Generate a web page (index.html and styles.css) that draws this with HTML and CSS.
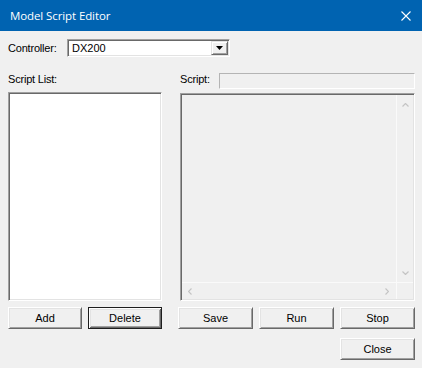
FILE: index.html
```html
<!DOCTYPE html>
<html lang="en">
<head>
  <meta charset="UTF-8">
  <title>Model Script Editor</title>
  <link rel="stylesheet" href="styles.css">
</head>
<body>
  <div class="window">
    <div class="titlebar">
      <span class="title">Model Script Editor</span>
      <svg class="close-x" width="10" height="10" viewBox="0 0 10 10">
        <path d="M0.5 0.5 L9.5 9.5 M9.5 0.5 L0.5 9.5" stroke="#fff" stroke-width="1.1" fill="none"/>
      </svg>
    </div>
    <div class="content">
      <div class="controller-row">
        <span class="label controller-label">Controller:</span>
        <div class="combo">
          <span class="combo-text">DX200</span>
          <div class="combo-btn">
            <svg width="7" height="4" viewBox="0 0 7 4"><path d="M0 0 H7 L3.5 4 Z" fill="#000"/></svg>
          </div>
        </div>
      </div>

      <div class="panes">
        <div class="pane-left">
          <div class="label list-label">Script List:</div>
          <div class="listbox"></div>
        </div>
        <div class="pane-right">
          <div class="script-row">
            <span class="label script-label">Script:</span>
            <div class="name-field"></div>
          </div>
          <div class="script-area">
            <div class="script-text"></div>
            <div class="vscroll">
              <svg width="7" height="4" viewBox="0 0 7 4"><path d="M0.5 3.5 L3.5 0.5 L6.5 3.5" stroke="#c4c4c4" stroke-width="1.2" fill="none"/></svg>
              <svg width="7" height="4" viewBox="0 0 7 4"><path d="M0.5 0.5 L3.5 3.5 L6.5 0.5" stroke="#c4c4c4" stroke-width="1.2" fill="none"/></svg>
            </div>
            <div class="hscroll">
              <svg width="4" height="7" viewBox="0 0 4 7"><path d="M3.5 0.5 L0.5 3.5 L3.5 6.5" stroke="#c4c4c4" stroke-width="1.2" fill="none"/></svg>
              <svg width="4" height="7" viewBox="0 0 4 7"><path d="M0.5 0.5 L3.5 3.5 L0.5 6.5" stroke="#c4c4c4" stroke-width="1.2" fill="none"/></svg>
            </div>
            <div class="corner"></div>
          </div>
        </div>
      </div>

      <div class="button-row">
        <div class="btn-group left-group">
          <button class="btn">Add</button>
          <button class="btn default">Delete</button>
        </div>
        <div class="btn-group right-group">
          <button class="btn">Save</button>
          <button class="btn">Run</button>
          <button class="btn">Stop</button>
        </div>
      </div>

      <div class="footer">
        <button class="btn close-btn">Close</button>
      </div>
    </div>
  </div>
</body>
</html>
```

FILE: styles.css
```css
body {
  margin: 0;
  background: #f0f0f0;
  font-family: "Liberation Sans", Arial, sans-serif;
  font-size: 11px;
  color: #000;
}
.window {
  width: 422px;
  height: 368px;
  background: #f0f0f0;
  overflow: hidden;
}
.titlebar {
  height: 31px;
  background: #0063b1;
  display: flex;
  align-items: center;
  justify-content: space-between;
  padding: 0 11px 0 10px;
  box-sizing: border-box;
}
.title {
  color: #fff;
  font-family: "Open Sans", "Noto Sans", sans-serif;
  font-size: 11.5px;
  letter-spacing: -0.1px;
}
.close-x {
  display: block;
}
.content {
  padding: 8px 7px 0 8px;
}
.label {
  line-height: 13px;
  white-space: nowrap;
  letter-spacing: -0.2px;
}
.controller-row {
  display: flex;
  align-items: center;
  height: 18px;
}
.controller-label {
  width: 59px;
}
.combo {
  width: 163px;
  height: 18px;
  box-sizing: border-box;
  background: #fff;
  border-style: solid;
  border-width: 1px;
  border-color: #a0a0a0 #fff #fff #a0a0a0;
  box-shadow: inset 1px 1px 0 #696969, inset -1px -1px 0 #e3e3e3;
  display: flex;
  align-items: center;
  justify-content: space-between;
  padding: 1px;
}
.combo-text {
  padding-left: 3px;
  line-height: 13px;
}
.combo-btn {
  width: 17px;
  height: 14px;
  box-sizing: border-box;
  background: #f0f0f0;
  border-style: solid;
  border-width: 1px;
  border-color: #e3e3e3 #696969 #696969 #e3e3e3;
  box-shadow: inset 1px 1px 0 #fff, inset -1px -1px 0 #a0a0a0;
  display: flex;
  align-items: center;
  justify-content: center;
}
.combo-btn svg {
  display: block;
}
.panes {
  display: flex;
  gap: 18px;
  margin-top: 16px;
}
.pane-left {
  width: 154px;
}
.list-label {
  height: 19px;
}
.listbox {
  height: 209px;
  box-sizing: border-box;
  background: #fff;
  border-style: solid;
  border-width: 1px;
  border-color: #a0a0a0 #fff #fff #a0a0a0;
  box-shadow: inset 1px 1px 0 #696969, inset -1px -1px 0 #e3e3e3;
}
.pane-right {
  width: 235px;
}
.script-row {
  display: flex;
  align-items: flex-start;
  height: 16px;
}
.script-label {
  width: 39px;
}
.name-field {
  flex: 1;
  height: 16px;
  box-sizing: border-box;
  border-style: solid;
  border-width: 1px;
  border-color: #b4b4b4 #fff #fff #b4b4b4;
  background: #f0f0f0;
}
.script-area {
  margin-top: 4px;
  height: 208px;
  box-sizing: border-box;
  border-style: solid;
  border-width: 1px;
  border-color: #a0a0a0 #fff #fff #a0a0a0;
  box-shadow: inset 1px 1px 0 #696969, inset -1px -1px 0 #e3e3e3;
  padding: 1px;
  display: grid;
  grid-template-columns: 1fr 17px;
  grid-template-rows: 1fr 17px;
}
.vscroll {
  border-left: 1px solid #fafafa;
  display: flex;
  flex-direction: column;
  align-items: center;
  justify-content: space-between;
  padding: 8px 0 7px;
}
.vscroll svg,
.hscroll svg {
  display: block;
}
.hscroll {
  border-top: 1px solid #fafafa;
  display: flex;
  align-items: center;
  justify-content: space-between;
  padding: 0 7px 0 6px;
}
.corner {
  border-top: 1px solid #fafafa;
  border-left: 1px solid #fafafa;
}
.button-row {
  display: flex;
  margin-top: 6px;
}
.btn-group {
  display: flex;
  gap: 6px;
}
.left-group .btn {
  width: 74px;
}
.right-group {
  margin-left: 16px;
}
.right-group .btn {
  width: 75px;
}
.btn {
  height: 22px;
  box-sizing: border-box;
  margin: 0;
  padding: 0;
  font-family: "Liberation Sans", Arial, sans-serif;
  font-size: 11px;
  color: #000;
  background: #f0f0f0;
  border-style: solid;
  border-width: 1px;
  border-color: #fff #696969 #696969 #fff;
  box-shadow: inset 1px 1px 0 #e3e3e3, inset -1px -1px 0 #a0a0a0;
}
.btn.default {
  border: 1px solid #1e1e1e;
  box-shadow: inset 1px 1px 0 #fff, inset -1px -1px 0 #696969, inset 2px 2px 0 #e3e3e3, inset -2px -2px 0 #a0a0a0;
}
.footer {
  display: flex;
  justify-content: flex-end;
  margin-top: 9px;
}
.close-btn {
  width: 75px;
}
```
